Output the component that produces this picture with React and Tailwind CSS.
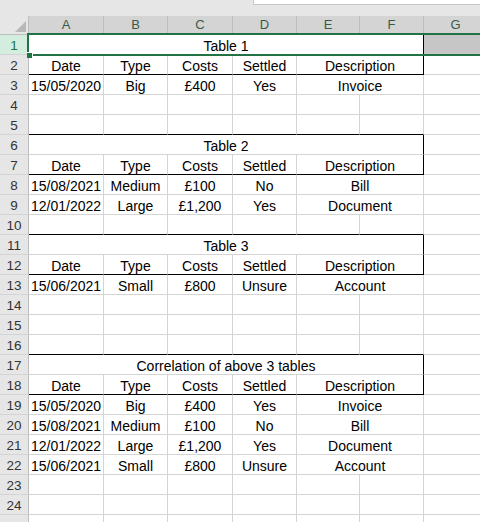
import React from 'react';

const GRID = 'grid grid-cols-[29px_75px_64px_65px_64px_63px_64px_64px]';

const HEAD = ['Date', 'Type', 'Costs', 'Settled', 'Description'];
const R1 = ['15/05/2020', 'Big', '£400', 'Yes', 'Invoice'];
const R2 = ['15/08/2021', 'Medium', '£100', 'No', 'Bill'];
const R3 = ['12/01/2022', 'Large', '£1,200', 'Yes', 'Document'];
const R4 = ['15/06/2021', 'Small', '£800', 'Unsure', 'Account'];

const titles = { 1: 'Table 1', 6: 'Table 2', 11: 'Table 3', 17: 'Correlation of above 3 tables' };
const values = {
  2: HEAD, 3: R1,
  7: HEAD, 8: R2, 9: R3,
  12: HEAD, 13: R4,
  18: HEAD, 19: R1, 20: R2, 21: R3, 22: R4,
};
const boxRows = [1, 2, 6, 7, 11, 12, 17, 18];
const blackBottom = [2, 5, 7, 10, 12, 16, 18];

function Cell({ children, span, right, bottom, className = '' }) {
  return (
    <div
      className={`h-[20px] border-r border-b flex items-end justify-center leading-[16px] whitespace-nowrap overflow-visible ${
        span === 6 ? 'col-span-6' : span === 2 ? 'col-span-2' : ''
      } ${right ? 'border-r-black' : 'border-r-[#d4d4d4]'} ${
        bottom ? 'border-b-black' : 'border-b-[#d4d4d4]'
      } ${className}`}
    >
      {children}
    </div>
  );
}

function Row({ n }) {
  const box = boxRows.includes(n);
  const bb = blackBottom.includes(n);
  const sel = n === 1;
  const vals = values[n];
  return (
    <div className={GRID}>
      <div
        className={`h-[20px] border-r border-b border-r-[#bdbdbd] border-b-[#d4d4d4] flex items-end justify-center leading-[16px] text-[13.5px] ${
          sel ? 'bg-[#d3eedf] text-[#217346]' : 'bg-[#e6e6e6] text-[#333]'
        }`}
      >
        {n < 25 ? n : ''}
      </div>
      {titles[n] ? (
        <Cell span={6} right={box} bottom={bb}>{titles[n]}</Cell>
      ) : vals ? (
        <>
          <Cell bottom={bb}>{vals[0]}</Cell>
          <Cell bottom={bb}>{vals[1]}</Cell>
          <Cell bottom={bb}>{vals[2]}</Cell>
          <Cell bottom={bb}>{vals[3]}</Cell>
          <Cell span={2} right={box} bottom={bb}>{vals[4]}</Cell>
        </>
      ) : (
        <>
          <Cell bottom={bb} />
          <Cell bottom={bb} />
          <Cell bottom={bb} />
          <Cell bottom={bb} />
          <Cell bottom={bb} />
          <Cell bottom={bb} right={box} />
        </>
      )}
      <Cell className={sel ? 'bg-[#c6c6c6]' : ''} />
    </div>
  );
}

export default function App() {
  const rows = Array.from({ length: 25 }, (_, i) => i + 1);
  return (
    <div
      className="relative w-[480px] h-[522px] overflow-hidden bg-white text-[14px] text-black"
      style={{ fontFamily: '"Liberation Sans", Arial, sans-serif' }}
    >
      {/* strip under the formula bar */}
      <div className="h-[16px] bg-[#e6e6e6] flex">
        <div className="ml-[253px] flex-1 h-[5px] bg-white border-l border-b border-[#c6c6c6]" />
      </div>

      {/* column letters */}
      <div className={GRID}>
        <div className="relative h-[19px] bg-[#e6e6e6] border-r border-b border-r-[#bdbdbd] border-b-[#bdbdbd]">
          <svg className="absolute right-[2px] bottom-[2px]" width="11" height="11" viewBox="0 0 11 11">
            <polygon points="11,0 11,11 0,11" fill="#b8b8b8" />
          </svg>
        </div>
        {['A', 'B', 'C', 'D', 'E', 'F', 'G'].map((c) => (
          <div
            key={c}
            className="h-[19px] bg-[#d4d4d4] border-r border-b border-r-[#bdbdbd] border-b-[#bdbdbd] flex items-center justify-center text-[13px] text-[#3a5a48]"
          >
            {c}
          </div>
        ))}
      </div>

      {rows.map((n) => (
        <Row key={n} n={n} />
      ))}

      {/* row 1 selection */}
      <div className="absolute left-[27px] top-[33px] w-[470px] h-[23px] border-2 border-[#217346]" />
      <div className="absolute left-[27px] top-[52px] w-[6px] h-[6px] bg-[#217346] border-t border-r border-white" />
    </div>
  );
}
